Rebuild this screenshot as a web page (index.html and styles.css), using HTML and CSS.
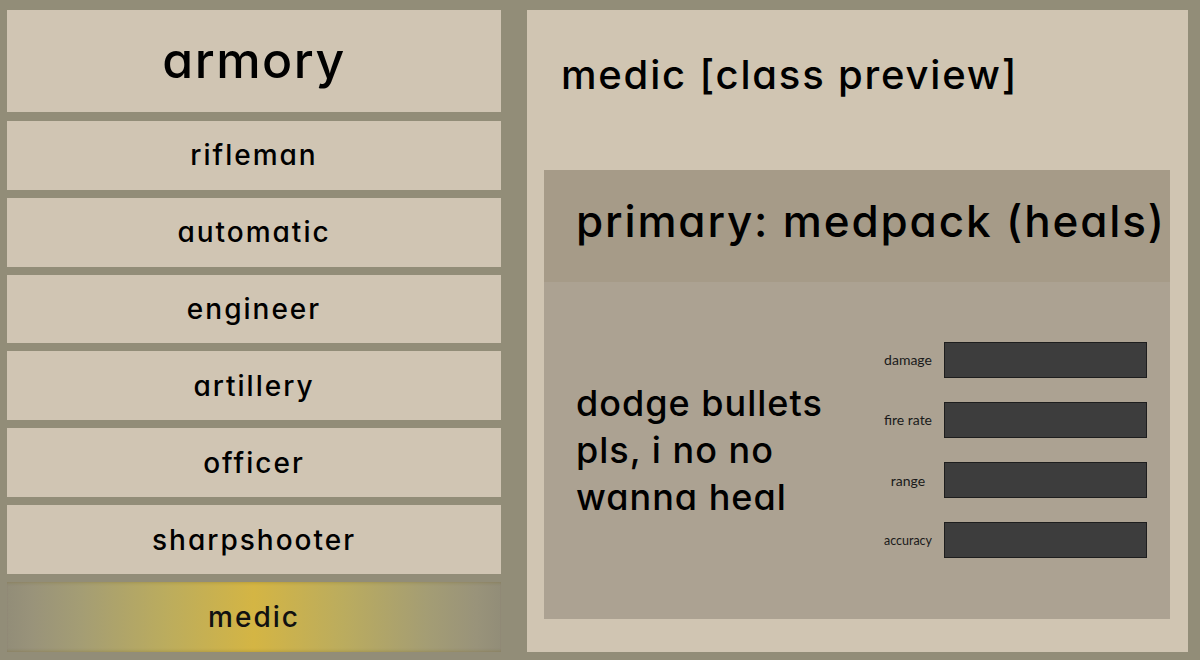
FILE: index.html
```html
<!DOCTYPE html>
<html>
<head>
<meta charset="utf-8">
<link rel="stylesheet" href="styles.css">
</head>
<body>
<div class="app">
  <aside class="armory">
    <div class="armory-title">armory</div>
    <div class="cls">rifleman</div>
    <div class="cls">automatic</div>
    <div class="cls">engineer</div>
    <div class="cls">artillery</div>
    <div class="cls">officer</div>
    <div class="cls">sharpshooter</div>
    <div class="cls active">medic</div>
  </aside>
  <main class="preview">
    <h1 class="preview-title">medic [class preview]</h1>
    <section class="weapon">
      <div class="weapon-head">primary: medpack (heals)</div>
      <div class="weapon-body">
        <p class="desc">dodge bullets<br>pls, i no no<br>wanna heal</p>
        <div class="stats">
          <div class="stat"><span class="stat-label">damage</span><span class="bar"></span></div>
          <div class="stat"><span class="stat-label">fire rate</span><span class="bar"></span></div>
          <div class="stat"><span class="stat-label">range</span><span class="bar"></span></div>
          <div class="stat"><span class="stat-label small">accuracy</span><span class="bar"></span></div>
        </div>
      </div>
    </section>
  </main>
</div>
</body>
</html>
```

FILE: styles.css
```css
* { box-sizing: border-box; margin: 0; padding: 0; }
html, body { width: 1200px; height: 660px; overflow: hidden; }
body {
  background: #928d78;
  font-family: Inter, "DejaVu Sans", sans-serif;
  font-feature-settings: "cv11" 1;
  font-weight: 500;
  color: #000;
}
.app {
  display: flex;
  gap: 26px;
  padding: 10px 12px 8px 7px;
  height: 660px;
}
.armory {
  width: 494px;
  display: flex;
  flex-direction: column;
  gap: 8px;
}
.armory-title {
  height: 102px;
  background: #d0c5b3;
  display: flex;
  align-items: center;
  justify-content: center;
  font-size: 50px;
  letter-spacing: 1.5px;
  margin-bottom: 1px;
  padding-bottom: 2px;
}
.cls {
  height: 69px;
  background: #d0c5b3;
  display: flex;
  align-items: center;
  justify-content: center;
  font-size: 28px;
  letter-spacing: 2px;
}
.cls.active {
  height: 70px;
  background: linear-gradient(90deg, #928d78 0%, #99937a 5%, #a49d74 15%, #bbac5e 32%, #d4b544 50%, #bbac5e 68%, #a49d74 85%, #99937a 95%, #928d78 100%);
  box-shadow: inset 0 3px 3px -2px rgba(110,90,20,.25), inset 0 -3px 3px -2px rgba(110,90,20,.25);
  color: #111;
}
.preview {
  flex: 1;
  background: #d0c5b2;
  display: flex;
  flex-direction: column;
  padding: 0 18px 33px 17px;
}
.preview-title {
  font-weight: 500;
  font-size: 40px;
  letter-spacing: 1.8px;
  height: 160px;
  padding: 41px 0 0 17px;
  line-height: 1.2;
}
.weapon {
  flex: 1;
  display: flex;
  flex-direction: column;
  background: #aca292;
}
.weapon-head {
  height: 112px;
  background: #a69b88;
  font-size: 44px;
  letter-spacing: 1.85px;
  padding: 24px 0 0 32px;
  white-space: nowrap;
}
.weapon-body {
  flex: 1;
  display: flex;
  align-items: center;
  justify-content: space-between;
  padding: 0 23px 0 32px;
}
.desc {
  font-size: 36px;
  letter-spacing: 1px;
  line-height: 47px;
}
.stats {
  display: flex;
  flex-direction: column;
  gap: 24.3px;
  margin-top: -1px;
}
.stat {
  display: flex;
  align-items: center;
  gap: 6px;
}
.stat-label {
  width: 60px;
  text-align: center;
  font-family: Lato, "Open Sans", sans-serif;
  font-weight: 400;
  font-size: 14px;
  color: #1a1a1a;
}
.stat-label.small { font-size: 12.5px; }
.bar {
  width: 203px;
  height: 36px;
  background: #3d3d3d;
  border: 1.5px solid #1e1e1e;
}
```
